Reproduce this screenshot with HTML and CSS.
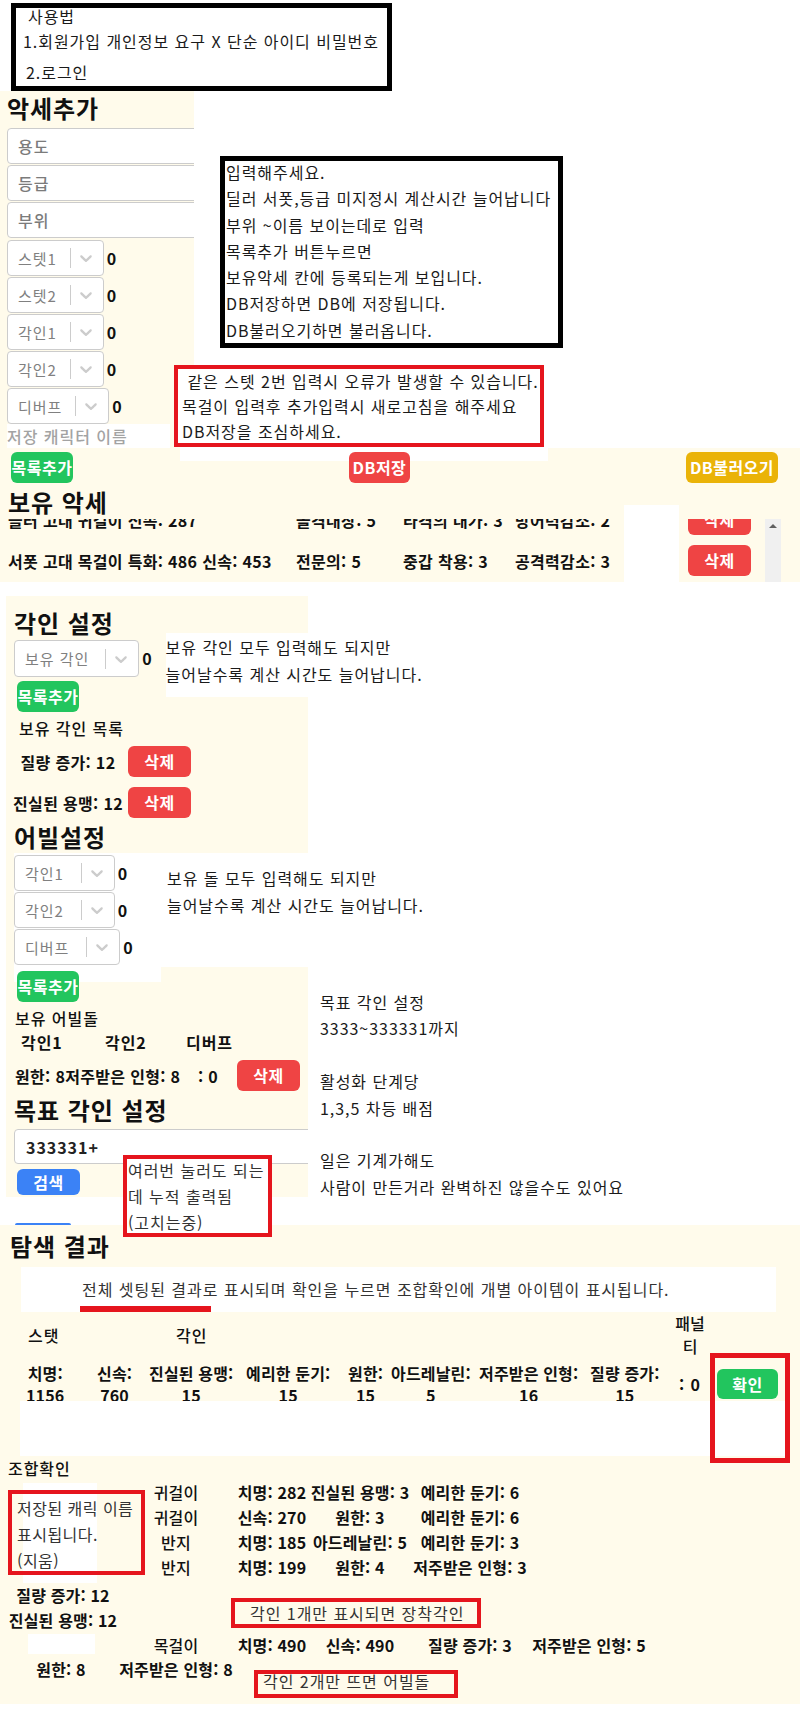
FILE: index.html
```html
<!DOCTYPE html>
<html lang="ko">
<head>
  <meta charset="utf-8">
  <link rel="stylesheet" href="styles.css">
</head>
<body>
  <div class="howto">
    <div class="howto-title">사용법</div>
    <div class="howto-line">1.회원가입 개인정보 요구 X 단순 아이디 비밀번호</div>
    <div class="howto-line last">2.로그인</div>
  </div>

  <div class="add-section">
    <div class="add-form">
      <h2 class="title">악세추가</h2>
      <div class="clip first"><input class="field" placeholder="용도"></div>
      <div class="clip"><input class="field" placeholder="등급"></div>
      <div class="clip"><input class="field" placeholder="부위"></div>
      <div class="pick-line first">
        <div class="pick"><span class="pick-text">스텟1</span><span class="pick-sep"></span><span class="pick-arrow"><svg width="20" height="20" viewBox="0 0 20 20"><path d="M4.516 7.548c0.436-0.446 1.043-0.481 1.576 0l3.908 3.747 3.908-3.747c0.533-0.481 1.141-0.446 1.574 0 0.436 0.445 0.408 1.197 0 1.615-0.406 0.418-4.695 4.502-4.695 4.502-0.217 0.223-0.502 0.335-0.787 0.335s-0.57-0.112-0.789-0.335c0 0-4.287-4.084-4.695-4.502s-0.436-1.170 0-1.615z"/></svg></span></div>
        <span class="zero">0</span>
      </div>
      <div class="pick-line">
        <div class="pick"><span class="pick-text">스텟2</span><span class="pick-sep"></span><span class="pick-arrow"><svg width="20" height="20" viewBox="0 0 20 20"><path d="M4.516 7.548c0.436-0.446 1.043-0.481 1.576 0l3.908 3.747 3.908-3.747c0.533-0.481 1.141-0.446 1.574 0 0.436 0.445 0.408 1.197 0 1.615-0.406 0.418-4.695 4.502-4.695 4.502-0.217 0.223-0.502 0.335-0.787 0.335s-0.57-0.112-0.789-0.335c0 0-4.287-4.084-4.695-4.502s-0.436-1.170 0-1.615z"/></svg></span></div>
        <span class="zero">0</span>
      </div>
      <div class="pick-line">
        <div class="pick"><span class="pick-text">각인1</span><span class="pick-sep"></span><span class="pick-arrow"><svg width="20" height="20" viewBox="0 0 20 20"><path d="M4.516 7.548c0.436-0.446 1.043-0.481 1.576 0l3.908 3.747 3.908-3.747c0.533-0.481 1.141-0.446 1.574 0 0.436 0.445 0.408 1.197 0 1.615-0.406 0.418-4.695 4.502-4.695 4.502-0.217 0.223-0.502 0.335-0.787 0.335s-0.57-0.112-0.789-0.335c0 0-4.287-4.084-4.695-4.502s-0.436-1.170 0-1.615z"/></svg></span></div>
        <span class="zero">0</span>
      </div>
      <div class="pick-line">
        <div class="pick"><span class="pick-text">각인2</span><span class="pick-sep"></span><span class="pick-arrow"><svg width="20" height="20" viewBox="0 0 20 20"><path d="M4.516 7.548c0.436-0.446 1.043-0.481 1.576 0l3.908 3.747 3.908-3.747c0.533-0.481 1.141-0.446 1.574 0 0.436 0.445 0.408 1.197 0 1.615-0.406 0.418-4.695 4.502-4.695 4.502-0.217 0.223-0.502 0.335-0.787 0.335s-0.57-0.112-0.789-0.335c0 0-4.287-4.084-4.695-4.502s-0.436-1.170 0-1.615z"/></svg></span></div>
        <span class="zero">0</span>
      </div>
      <div class="pick-line">
        <div class="pick"><span class="pick-text">디버프</span><span class="pick-sep"></span><span class="pick-arrow"><svg width="20" height="20" viewBox="0 0 20 20"><path d="M4.516 7.548c0.436-0.446 1.043-0.481 1.576 0l3.908 3.747 3.908-3.747c0.533-0.481 1.141-0.446 1.574 0 0.436 0.445 0.408 1.197 0 1.615-0.406 0.418-4.695 4.502-4.695 4.502-0.217 0.223-0.502 0.335-0.787 0.335s-0.57-0.112-0.789-0.335c0 0-4.287-4.084-4.695-4.502s-0.436-1.170 0-1.615z"/></svg></span></div>
        <span class="zero">0</span>
      </div>
      <input class="char-name" placeholder="저장 캐릭터 이름">
    </div>

    <div class="add-notes">
      <div class="note-black">
        <div class="note-lines">
          <div>입력해주세요.</div>
          <div>딜러 서폿,등급 미지정시 계산시간 늘어납니다</div>
          <div>부위 ~이름 보이는데로 입력</div>
          <div>목록추가 버튼누르면</div>
          <div>보유악세 칸에 등록되는게 보입니다.</div>
          <div>DB저장하면 DB에 저장됩니다.</div>
          <div>DB불러오기하면 불러옵니다.</div>
        </div>
      </div>
      <div class="note-red">
        <div>&nbsp;같은 스텟 2번 입력시 오류가 발생할 수 있습니다.</div>
        <div>목걸이 입력후 추가입력시 새로고침을 해주세요</div>
        <div>DB저장을 조심하세요.</div>
      </div>
      <div class="note-red-tail"></div>
    </div>
  </div>

  <div class="owned">
    <div class="btn-row">
      <button class="btn green add">목록추가</button>
      <button class="btn red">DB저장</button>
      <button class="btn yellow">DB불러오기</button>
    </div>
    <h2 class="title owned-title">보유 악세</h2>
    <div class="owned-list">
      <div class="owned-rows">
        <div class="owned-inner">
          <div class="acc-row">
            <span>블러 고대 귀걸이 신속: 287</span>
            <span>돌격대장: 5</span>
            <span>타격의 대가: 3</span>
            <span>방어력감소: 2</span>
            <span></span><span></span>
            <button class="btn red del">삭제</button>
          </div>
          <div class="acc-row">
            <span>서폿 고대 목걸이 특화: 486 신속: 453</span>
            <span>전문의: 5</span>
            <span>중갑 착용: 3</span>
            <span>공격력감소: 3</span>
            <span></span><span></span>
            <button class="btn red del">삭제</button>
          </div>
        </div>
      </div>
      <div class="fake-scroll"><span class="fake-arrow"></span></div>
      <div class="blank-col"></div>
    </div>
  </div>

  <div class="setup">
    <div class="setup-col">
      <h2 class="title">각인 설정</h2>
      <div class="pick-line single">
        <div class="pick"><span class="pick-text tight">보유 각인</span><span class="pick-sep"></span><span class="pick-arrow"><svg width="20" height="20" viewBox="0 0 20 20"><path d="M4.516 7.548c0.436-0.446 1.043-0.481 1.576 0l3.908 3.747 3.908-3.747c0.533-0.481 1.141-0.446 1.574 0 0.436 0.445 0.408 1.197 0 1.615-0.406 0.418-4.695 4.502-4.695 4.502-0.217 0.223-0.502 0.335-0.787 0.335s-0.57-0.112-0.789-0.335c0 0-4.287-4.084-4.695-4.502s-0.436-1.170 0-1.615z"/></svg></span></div>
        <span class="zero">0</span>
        <div class="side-note eng-note">
          <div>보유 각인 모두 입력해도 되지만</div>
          <div>늘어날수록 계산 시간도 늘어납니다.</div>
        </div>
      </div>
      <button class="btn green add small">목록추가</button>
      <div class="sub-label">보유 각인 목록</div>
      <div class="eng-row">
        <span class="eng-name">질량 증가: 12</span>
        <button class="btn red del">삭제</button>
      </div>
      <div class="eng-row">
        <span class="eng-name">진실된 용맹: 12</span>
        <button class="btn red del">삭제</button>
      </div>

      <h2 class="title stone-title">어빌설정</h2>
      <div class="stone-area">
        <div class="stone-picks">
          <div class="pick-line">
            <div class="pick"><span class="pick-text">각인1</span><span class="pick-sep"></span><span class="pick-arrow"><svg width="20" height="20" viewBox="0 0 20 20"><path d="M4.516 7.548c0.436-0.446 1.043-0.481 1.576 0l3.908 3.747 3.908-3.747c0.533-0.481 1.141-0.446 1.574 0 0.436 0.445 0.408 1.197 0 1.615-0.406 0.418-4.695 4.502-4.695 4.502-0.217 0.223-0.502 0.335-0.787 0.335s-0.57-0.112-0.789-0.335c0 0-4.287-4.084-4.695-4.502s-0.436-1.170 0-1.615z"/></svg></span></div>
            <span class="zero">0</span>
          </div>
          <div class="pick-line">
            <div class="pick"><span class="pick-text">각인2</span><span class="pick-sep"></span><span class="pick-arrow"><svg width="20" height="20" viewBox="0 0 20 20"><path d="M4.516 7.548c0.436-0.446 1.043-0.481 1.576 0l3.908 3.747 3.908-3.747c0.533-0.481 1.141-0.446 1.574 0 0.436 0.445 0.408 1.197 0 1.615-0.406 0.418-4.695 4.502-4.695 4.502-0.217 0.223-0.502 0.335-0.787 0.335s-0.57-0.112-0.789-0.335c0 0-4.287-4.084-4.695-4.502s-0.436-1.170 0-1.615z"/></svg></span></div>
            <span class="zero">0</span>
          </div>
          <div class="pick-line">
            <div class="pick"><span class="pick-text">디버프</span><span class="pick-sep"></span><span class="pick-arrow"><svg width="20" height="20" viewBox="0 0 20 20"><path d="M4.516 7.548c0.436-0.446 1.043-0.481 1.576 0l3.908 3.747 3.908-3.747c0.533-0.481 1.141-0.446 1.574 0 0.436 0.445 0.408 1.197 0 1.615-0.406 0.418-4.695 4.502-4.695 4.502-0.217 0.223-0.502 0.335-0.787 0.335s-0.57-0.112-0.789-0.335c0 0-4.287-4.084-4.695-4.502s-0.436-1.170 0-1.615z"/></svg></span></div>
            <span class="zero">0</span>
          </div>
        </div>
        <div class="side-note stone-note">
          <div>보유 돌 모두 입력해도 되지만</div>
          <div>늘어날수록 계산 시간도 늘어납니다.</div>
        </div>
      </div>
      <button class="btn green add small">목록추가</button>
      <div class="sub-label stone-label">보유 어빌돌</div>
      <div class="stone-head">
        <span>각인1</span><span>각인2</span><span>디버프</span>
      </div>
      <div class="stone-row">
        <span class="stone-vals">원한: 8저주받은 인형: 8</span>
        <span class="stone-pen">: 0</span>
        <button class="btn red del">삭제</button>
      </div>

      <h2 class="title goal-title">목표 각인 설정</h2>
      <div class="clip goal"><input class="field goal-input" value="333331+"></div>
      <button class="btn blue search">검색</button>
    </div>

    <div class="setup-notes">
      <div>목표 각인 설정</div>
      <div>3333~333331까지</div>
      <div>&nbsp;</div>
      <div>활성화 단계당</div>
      <div>1,3,5 차등 배점</div>
      <div>&nbsp;</div>
      <div>일은 기계가해도</div>
      <div>사람이 만든거라 완벽하진 않을수도 있어요</div>
    </div>

    <div class="fix-note">
      <div>여러번 눌러도 되는</div>
      <div>데 누적 출력됨</div>
      <div>(고치는중)</div>
    </div>
  </div>

  <div class="hidden-btn"></div>

  <div class="result">
    <h2 class="title result-title">탐색 결과</h2>
    <div class="info-box">
      전체 셋팅된 결과로 표시되며 확인을 누르면 조합확인에 개별 아이템이 표시됩니다.
      <span class="info-mark"></span>
    </div>

    <div class="result-table">
      <div class="th th-stat">스탯</div>
      <div class="th th-eng">각인</div>
      <div class="th th-pen">패널티</div>

      <div class="td"><span>치명:</span><span>1156</span></div>
      <div class="td"><span>신속:</span><span>760</span></div>
      <div class="td"><span>진실된 용맹:</span><span>15</span></div>
      <div class="td"><span>예리한 둔기:</span><span>15</span></div>
      <div class="td"><span>원한:</span><span>15</span></div>
      <div class="td"><span>아드레날린:</span><span>5</span></div>
      <div class="td"><span>저주받은 인형:</span><span>16</span></div>
      <div class="td"><span>질량 증가:</span><span>15</span></div>
      <div class="td-pen">: 0</div>
      <div class="td-btn"><button class="btn green ok">확인</button></div>
    </div>

    <div class="blank-box"></div>
    <div class="ok-mark"></div>

    <div class="combo-title">조합확인</div>
    <div class="combo-block">
      <div class="combo-left"><div class="name-slot"></div></div>
      <div class="combo-rows">
        <div class="combo-row">
          <span class="slot">귀걸이</span><span>치명: 282</span><span>진실된 용맹: 3</span><span>예리한 둔기: 6</span>
        </div>
        <div class="combo-row">
          <span class="slot">귀걸이</span><span>신속: 270</span><span>원한: 3</span><span>예리한 둔기: 6</span>
        </div>
        <div class="combo-row">
          <span class="slot">반지</span><span>치명: 185</span><span>아드레날린: 5</span><span>예리한 둔기: 3</span>
        </div>
        <div class="combo-row">
          <span class="slot">반지</span><span>치명: 199</span><span>원한: 4</span><span>저주받은 인형: 3</span>
        </div>
      </div>
    </div>
    <div class="combo-eng">질량 증가: 12</div>
    <div class="combo-eng">진실된 용맹: 12</div>
    <div class="combo-block neck">
      <div class="combo-left"><div class="name-slot small"></div></div>
      <div class="combo-row">
        <span class="slot">목걸이</span><span>치명: 490</span><span>신속: 490</span><span>질량 증가: 3</span><span>저주받은 인형: 5</span>
      </div>
    </div>
    <div class="stone-line">
      <span class="stone-a">원한: 8</span><span class="stone-b">저주받은 인형: 8</span>
    </div>

    <div class="red-note name-note">
      <div>저장된 캐릭 이름</div>
      <div>표시됩니다.</div>
      <div>(지움)</div>
    </div>
    <div class="red-note equip-note">각인 1개만 표시되면 장착각인</div>
    <div class="red-note stone-tip">각인 2개만 뜨면 어빌돌</div>
  </div>
</body>
</html>
```

FILE: styles.css
```css
body {
    margin: 0;
    font-family: "Noto Sans CJK KR", "Noto Sans", sans-serif;
    font-size: 16px;
    letter-spacing: 0.06em;
    color: #111;
    background: #fff;
}
.title {
    margin: 0;
    font-size: 24px;
    font-weight: 700;
    line-height: 32px;
    letter-spacing: 0.04em;
}
.btn {
    border: 0;
    border-radius: 6px;
    color: #fff;
    font-family: inherit;
    font-size: 16px;
    font-weight: 700;
    letter-spacing: 0.03em;
    height: 31px;
    line-height: 31px;
    padding: 0 4px;
    white-space: nowrap;
}
.green { background: #22c55e; }
.red { background: #ef4444; }
.yellow { background: #eab308; }
.blue { background: #3b82f6; }
.btn.add {
    width: 62px;
    padding: 0;
    overflow: visible;
}
.btn.del {
    width: 63px;
    padding: 0;
}

/* usage box */
.howto {
    box-sizing: border-box;
    width: 381px;
    height: 88px;
    margin: 3px 0 0 11px;
    border: 5px solid #000;
    padding-left: 7px;
    color: #1a1a1a;
}
.howto-title {
    line-height: 16px;
    padding-left: 5px;
}
.howto-line {
    line-height: 34px;
}
.howto-line.last {
    line-height: 28px;
    padding-left: 3px;
}

/* accessory form */
.add-section {
    display: flex;
    align-items: flex-start;
}
.add-form {
    width: 194px;
    flex: none;
    box-sizing: border-box;
    background: #fffbeb;
    padding-left: 7px;
}
.add-form .title {
    margin-top: 1px;
}
.clip {
    overflow: hidden;
    margin-top: 1px;
}
.clip.first {
    margin-top: 4px;
}
.field {
    box-sizing: border-box;
    width: 300px;
    height: 36px;
    border: 1px solid #ccc;
    border-radius: 4px;
    padding: 0 10px;
    font-family: inherit;
    font-size: 16px;
    font-weight: 500;
    letter-spacing: inherit;
    display: block;
    background: #fff;
}
.field::placeholder {
    color: #7b7b7b;
}
.pick-line {
    display: flex;
    align-items: center;
    margin-top: 1px;
}
.pick-line.first {
    margin-top: 2px;
}
.pick {
    display: inline-flex;
    align-items: center;
    box-sizing: border-box;
    height: 36px;
    border: 1px solid #ccc;
    border-radius: 4px;
    background: #fff;
}
.pick-text {
    padding: 0 13px 0 10px;
    font-size: 15px;
    color: #808080;
    white-space: nowrap;
}
.pick-text.tight {
    padding-right: 16px;
}
.stone-picks .pick-text {
    padding-right: 17px;
}
.pick-sep {
    width: 1px;
    height: 20px;
    background: #ccc;
}
.pick-arrow {
    display: flex;
    padding: 0 7px 0 5px;
}
.pick-arrow svg {
    fill: #ccc;
}
.zero {
    font-weight: 700;
    margin-left: 3px;
}
.char-name {
    display: block;
    box-sizing: border-box;
    width: 163px;
    height: 24px;
    border: 0;
    padding: 0;
    font-family: inherit;
    font-size: 16px;
    font-weight: 500;
    letter-spacing: inherit;
    background: #fff;
}
.char-name::placeholder {
    color: #a3a3a3;
}
.add-notes {
    flex: 1;
}
.note-black {
    box-sizing: border-box;
    width: 343px;
    height: 192px;
    margin: 65px 0 0 26px;
    border: 5px solid #000;
    background: #fff;
    color: #1a1a1a;
}
.note-lines {
    margin-top: -2px;
    padding-left: 1px;
    line-height: 26.3px;
    white-space: nowrap;
}
.note-red {
    box-sizing: border-box;
    width: 370px;
    height: 82px;
    margin: 17px 0 0 -20px;
    border: 4px solid #e5151d;
    background: #fff;
    padding-left: 4px;
    line-height: 25px;
    color: #1a1a1a;
    white-space: nowrap;
}
.note-red-tail {
    position: relative;
    z-index: 1;
    width: 368px;
    height: 14px;
    margin: 0 0 -14px -14px;
    background: #fff;
}

/* owned accessories */
.owned {
    position: relative;
    background: #fffbeb;
    padding-top: 4px;
}
.btn-row {
    position: relative;
    z-index: 2;
    display: flex;
    justify-content: space-between;
    padding: 0 22px 0 11px;
}
.owned-title {
    margin-top: 3px;
    padding-left: 8px;
}
.owned-list {
    position: relative;
    display: flex;
    height: 63px;
    margin-top: 1px;
}
.owned-rows {
    width: 765px;
    overflow: hidden;
}
.owned-inner {
    margin-top: -20px;
}
.acc-row {
    display: grid;
    grid-template-columns: 288px 107px 112px 109px 55px 9px 63px;
    align-items: center;
    height: 41px;
    padding-left: 8px;
    font-weight: 700;
    letter-spacing: 0.02em;
    white-space: nowrap;
}
.fake-scroll {
    width: 16px;
    background: #f0f0f0;
}
.fake-arrow {
    display: block;
    width: 0;
    height: 0;
    margin: 5px auto 0;
    border-left: 4px solid transparent;
    border-right: 4px solid transparent;
    border-bottom: 4px solid #606060;
}
.blank-col {
    position: absolute;
    left: 624px;
    top: -14px;
    width: 55px;
    height: 77px;
    background: #fff;
}

/* engraving / stone setup */
.setup {
    position: relative;
    display: flex;
    align-items: flex-start;
    margin-top: 14px;
}
.setup-col {
    width: 302px;
    flex: none;
    box-sizing: border-box;
    margin-left: 6px;
    padding: 11px 0 2px 8px;
    background: #fffbeb;
}
.pick-line.single {
    align-items: flex-start;
    height: 37px;
}
.pick-line.single .pick {
    height: 37px;
}
.pick-line.single .zero {
    line-height: 37px;
}
.side-note {
    background: #fff;
    color: #1a1a1a;
    line-height: 27px;
    white-space: nowrap;
}
.eng-note {
    margin: -7px 0 0 13px;
    padding: 1px 0 9px 0;
    height: 54px;
}
.btn.small {
    position: relative;
    display: block;
    margin: 4px 0 0 3px;
}
.sub-label {
    margin: 4px 0 0 5px;
    line-height: 24px;
    font-weight: 500;
}
.eng-row {
    display: flex;
    align-items: center;
    margin-top: 6px;
}
.eng-row + .eng-row {
    margin-top: 10px;
}
.eng-name {
    width: 112px;
    margin-left: -2px;
    text-align: center;
    font-weight: 700;
    letter-spacing: 0.02em;
    white-space: nowrap;
}
.eng-row .del {
    margin-left: 4px;
}
.stone-title {
    margin-top: 3px;
}
.stone-area {
    display: flex;
    align-items: flex-start;
}
.stone-picks {
    width: 147px;
    flex: none;
    padding: 2px 0 17px 0;
    margin-bottom: -15px;
    background: #fff;
}
.stone-picks .pick-line:first-child {
    margin-top: 0;
}
.stone-note {
    flex: 1;
    height: 114px;
    box-sizing: border-box;
    padding: 12px 0 0 6px;
}
.stone-label {
    margin: 4px 0 0 1px;
}
.stone-head {
    display: flex;
    line-height: 24px;
    font-weight: 700;
    padding-left: 7px;
}
.stone-head span:nth-child(1) { width: 84px; }
.stone-head span:nth-child(2) { width: 81px; }
.stone-row {
    display: flex;
    align-items: center;
    margin-top: 6px;
    font-weight: 700;
    letter-spacing: 0.02em;
    white-space: nowrap;
}
.stone-vals {
    margin-left: 1px;
    width: 183px;
}
.stone-pen {
    width: 39px;
}
.goal-title {
    margin-top: 3px;
}
.clip.goal {
    margin-top: 3px;
}
.goal-input {
    width: 400px;
    height: 35px;
    padding-left: 11px;
    color: #222;
    font-weight: 600;
}
.btn.search {
    display: block;
    width: 63px;
    height: 26px;
    line-height: 26px;
    margin: 5px 0 0 3px;
    padding: 0;
}
.setup-notes {
    margin: 393px 0 0 12px;
    line-height: 26.4px;
    color: #1a1a1a;
    white-space: nowrap;
}
.fix-note {
    position: absolute;
    left: 123px;
    top: 559px;
    z-index: 3;
    box-sizing: border-box;
    width: 149px;
    height: 82px;
    border: 4px solid #e5151d;
    background: #fff;
    padding-left: 1px;
    line-height: 26px;
    color: #333;
    white-space: nowrap;
}
.fix-note div:first-child {
    margin-top: -2px;
}
.hidden-btn {
    width: 56px;
    height: 2px;
    margin: 23px 0 0 15px;
    background: #3b82f6;
    border-radius: 3px 3px 0 0;
}

/* search result */
.result {
    position: relative;
    background: #fffbeb;
    padding: 5px 0 23px 0;
}
.result-title {
    padding-left: 10px;
}
.info-box {
    position: relative;
    box-sizing: border-box;
    width: 755px;
    height: 45px;
    margin: 5px 0 0 21px;
    padding-left: 61px;
    background: #fff;
    line-height: 45px;
    color: #333;
    white-space: nowrap;
}
.info-mark {
    position: absolute;
    left: 59px;
    top: 39px;
    width: 131px;
    height: 6px;
    background: #e5151d;
}
.result-table {
    display: grid;
    grid-template-columns: 71px 52px 97px 102px 43px 88px 111px 79px 42px 6px 61px;
    grid-template-rows: 46px 48px;
    padding-left: 26px;
}
.th {
    grid-row: 1;
    align-self: center;
    line-height: 23px;
    font-weight: 500;
}
.th-stat {
    grid-column: 1 / 3;
    padding-left: 2px;
}
.th-eng {
    grid-column: 3 / 9;
    padding-left: 27px;
}
.th-pen {
    grid-column: 9;
    text-align: center;
    letter-spacing: 0;
}
.td {
    grid-row: 2;
    display: flex;
    flex-direction: column;
    align-items: center;
    justify-self: start;
    padding-top: 4px;
    line-height: 22px;
    font-weight: 700;
    letter-spacing: 0.01em;
    white-space: nowrap;
}
.td-pen {
    grid-row: 2;
    grid-column: 9;
    align-self: center;
    padding-top: 4px;
    text-align: center;
    font-weight: 700;
}
.td-btn {
    grid-row: 2;
    grid-column: 11;
    align-self: center;
    padding-top: 4px;
}
.btn.ok {
    width: 61px;
    height: 30px;
    line-height: 30px;
    padding: 0;
}
.blank-box {
    position: relative;
    width: 770px;
    height: 55px;
    margin: -5px 0 0 20px;
    background: #fff;
}
.ok-mark {
    position: absolute;
    left: 710px;
    top: 128px;
    box-sizing: border-box;
    width: 80px;
    height: 110px;
    border: 5px solid #e5151d;
}
.combo-title {
    padding-left: 8px;
    line-height: 24px;
    font-weight: 500;
}
.combo-block {
    display: flex;
}
.combo-left {
    width: 145px;
    flex: none;
}
.name-slot {
    width: 74px;
    height: 100px;
    margin: 3px 0 0 23px;
    background: #fff;
}
.name-slot.small {
    width: 67px;
    height: 20px;
    margin: 1px 0 0 28px;
}
.combo-row {
    display: grid;
    grid-template-columns: 62px 28px 74px 102px 118px 120px;
    line-height: 25px;
    font-weight: 700;
    letter-spacing: 0.01em;
    white-space: nowrap;
    text-align: center;
}
.combo-row .slot {
    font-weight: 500;
    grid-column: 1;
}
.combo-row span:nth-child(2) { grid-column: 3; }
.combo-row span:nth-child(3) { grid-column: 4; }
.combo-row span:nth-child(4) { grid-column: 5; }
.combo-row span:nth-child(5) { grid-column: 6; }
.neck .combo-row {
    line-height: 24px;
}
.combo-eng {
    width: 110px;
    margin-left: 8px;
    line-height: 25px;
    text-align: center;
    font-weight: 700;
    letter-spacing: 0.01em;
    white-space: nowrap;
}
.stone-line {
    display: flex;
    line-height: 24px;
    font-weight: 700;
    letter-spacing: 0.01em;
    white-space: nowrap;
}
.stone-a {
    width: 110px;
    margin-left: 6px;
    text-align: center;
}
.stone-b {
    width: 62px;
    margin-left: 29px;
    display: flex;
    justify-content: center;
}
.red-note {
    position: absolute;
    box-sizing: border-box;
    border: 4px solid #e5151d;
    color: #333;
    white-space: nowrap;
}
.name-note {
    left: 8px;
    top: 265px;
    width: 137px;
    height: 85px;
    padding: 1px 0 0 5px;
    line-height: 26px;
    letter-spacing: 0.03em;
}
.equip-note {
    left: 231px;
    top: 373px;
    width: 250px;
    height: 30px;
    padding-left: 15px;
    line-height: 22px;
}
.stone-tip {
    left: 254px;
    top: 445px;
    width: 204px;
    height: 28px;
    padding-left: 5px;
    line-height: 14px;
}
```
